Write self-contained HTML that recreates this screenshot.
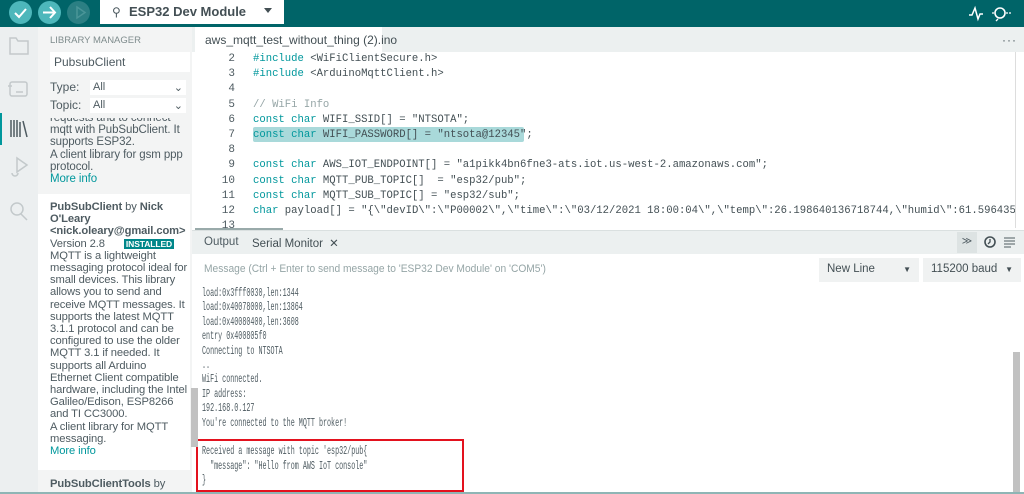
<!DOCTYPE html>
<html><head><meta charset="utf-8"><style>
*{margin:0;padding:0;box-sizing:border-box}
body{width:1024px;height:494px;overflow:hidden;background:#fff;font-family:"Liberation Sans",sans-serif;position:relative}
.abs{position:absolute}
.top{left:0;top:0;width:1024px;height:27px;background:#006468}
.btn{width:23px;height:23px;border-radius:50%;top:1px;background:#4db7bb}
.act{left:0;top:27px;width:38px;height:467px;background:#eceff0}
.lib{left:38px;top:27px;width:154px;height:467px;background:#f3f4f4;overflow:hidden}
.lt{font-size:11.2px;line-height:12.2px;color:#4e5b61;white-space:nowrap;letter-spacing:-0.1px}
.code{font-family:"Liberation Mono",monospace;font-size:10.6px;color:#434f54;white-space:pre}
.ln{width:40px;text-align:right;color:#4e5b61;left:195px}
.kw{color:#00979c}
.cm{color:#95a5a6}
.ser{font-family:"Liberation Mono",monospace;font-size:12px;color:#4e5b61;white-space:pre;transform:scaleX(0.56);transform-origin:left}
</style></head><body>
<div class="abs top"></div>
<div class="abs btn" style="left:9px"><svg width="23" height="23"><path d="M6 12l4 4 7-8" stroke="#fff" stroke-width="2" fill="none"/></svg></div>
<div class="abs btn" style="left:38px"><svg width="23" height="23"><path d="M5 11.5h12M12 6l5 5.5-5 5.5" stroke="#fff" stroke-width="2" fill="none"/></svg></div>
<div class="abs btn" style="left:67px;background:#2b7f83"><svg width="23" height="23"><path d="M10 6l8 5.5-8 5.5z" stroke="#4a9598" stroke-width="1.5" fill="none"/></svg></div>
<div class="abs" style="left:100px;top:0;width:184px;height:24px;background:#fff"></div>
<div class="abs" style="left:112px;top:5px;font-size:12px;color:#4e5b61">⚲</div>
<div class="abs" style="left:129px;top:4px;font-size:13px;font-weight:bold;color:#434f54">ESP32 Dev Module</div>
<div class="abs" style="left:264px;top:8px;border:4px solid transparent;border-top:5px solid #434f54"></div>
<svg class="abs" style="left:965px;top:3px" width="60" height="20"><path d="M4 12h3l3-7 3 11 2-5h3" stroke="#fff" stroke-width="1.5" fill="none"/><circle cx="35" cy="10" r="5" stroke="#fff" stroke-width="1.6" fill="none"/><path d="M27 10h2M41 10h2M44 10h2M33 16l-2 2" stroke="#fff" stroke-width="1.3"/></svg>

<div class="abs act"></div>
<svg class="abs" style="left:0;top:30px" width="38" height="200">
<path d="M10 8h6l2 3h10v13H10z" stroke="#c3c9cb" stroke-width="1.5" fill="none"/>
<rect x="10" y="52" width="17" height="14" rx="2" stroke="#c3c9cb" stroke-width="1.5" fill="none"/><path d="M16 62h7M8 56h4" stroke="#c3c9cb" stroke-width="1.5"/>
<rect x="0" y="83" width="2" height="32" fill="#00979c"/>
<path d="M11 90v17M14 90v17M17 90v17M20 92v15M23 91l4 16" stroke="#4e5b61" stroke-width="1.5" fill="none"/>
<path d="M17 128l10 7-10 7zM12 143a3 3 0 1 0 6 0" stroke="#c3c9cb" stroke-width="1.5" fill="none"/>
<circle cx="17" cy="179" r="6" stroke="#c3c9cb" stroke-width="1.5" fill="none"/><path d="M21 184l6 6" stroke="#c3c9cb" stroke-width="1.5"/>
</svg>

<div class="abs lib">
<div class="abs" style="left:0;top:0;width:154px;height:91px;background:#f3f4f4;z-index:2"></div>
<div class="abs" style="z-index:3;left:12px;top:8px;font-size:9.5px;color:#7f8c8d">LIBRARY MANAGER</div>
<div class="abs" style="z-index:3;left:12px;top:25px;width:140px;height:20px;background:#fff;font-size:12px;color:#4e5b61;padding:3px 4px">PubsubClient</div>
<div class="abs" style="z-index:3;left:12px;top:53px;font-size:12px;color:#4e5b61">Type:</div>
<div class="abs" style="z-index:3;left:52px;top:53px;width:96px;height:15px;background:#fff;font-size:11px;color:#4e5b61;padding:1px 3px">All<span style="float:right">⌄</span></div>
<div class="abs" style="z-index:3;left:12px;top:71px;font-size:12px;color:#4e5b61">Topic:</div>
<div class="abs" style="z-index:3;left:52px;top:71px;width:96px;height:15px;background:#fff;font-size:11px;color:#4e5b61;padding:1px 3px">All<span style="float:right">⌄</span></div>
<div class="abs lt" style="left:12px;top:85px;font-size:11.5px">requests and to connect<br>mqtt with PubSubClient. It<br>supports ESP32.<br>A client library for gsm ppp<br>protocol.<br><span style="color:#00979c">More info</span></div>
<div class="abs" style="left:0;top:167px;width:152px;height:276px;background:#fff"></div>
<div class="abs lt" style="left:12px;top:174px"><b>PubSubClient</b> by <b>Nick</b><br><b>O'Leary</b><br><b>&lt;nick.oleary@gmail.com&gt;</b><br>Version 2.8 <span style="background:#00878a;color:#fff;font-size:8.5px;font-weight:bold;padding:0 2px;margin-left:16px">INSTALLED</span><br>MQTT is a lightweight<br>messaging protocol ideal for<br>small devices. This library<br>allows you to send and<br>receive MQTT messages. It<br>supports the latest MQTT<br>3.1.1 protocol and can be<br>configured to use the older<br>MQTT 3.1 if needed. It<br>supports all Arduino<br>Ethernet Client compatible<br>hardware, including the Intel<br>Galileo/Edison, ESP8266<br>and TI CC3000.<br>A client library for MQTT<br>messaging.<br><span style="color:#00979c">More info</span></div>
<div class="abs lt" style="left:12px;top:451px"><b>PubSubClientTools</b> by</div>
<div class="abs" style="left:153px;top:361px;width:6px;height:59px;background:#c1c1c1"></div>
</div>

<div class="abs" style="left:192px;top:27px;width:832px;height:25px;background:#ecf0f0"></div>
<div class="abs" style="left:195px;top:27px;width:187px;height:25px;background:#fff"></div>
<div class="abs" style="left:205px;top:33px;font-size:12px;color:#434f54">aws_mqtt_test_without_thing (2).ino</div>
<div class="abs" style="left:1002px;top:33px;font-size:12px;color:#4e5b61;letter-spacing:1px">···</div>

<div class="abs" style="left:253px;top:127px;width:271px;height:15px;background:#a9d9da;border-radius:2px"></div>
<div class="abs code ln" style="top:52px;line-height:15.2px;font-size:11px">2
3
4
5
6
7
8
9
10
11
12
13</div>
<div class="abs code" style="left:253px;top:52px;width:762px;overflow:hidden;line-height:15.2px"><span class="kw">#include</span> &lt;WiFiClientSecure.h&gt;
<span class="kw">#include</span> &lt;ArduinoMqttClient.h&gt;

<span class="cm">// WiFi Info</span>
<span class="kw">const char</span> WIFI_SSID[] = "NTSOTA";
<span class="kw">const char</span> WIFI_PASSWORD[] = "ntsota@12345";

<span class="kw">const char</span> AWS_IOT_ENDPOINT[] = "a1pikk4bn6fne3-ats.iot.us-west-2.amazonaws.com";
<span class="kw">const char</span> MQTT_PUB_TOPIC[]  = "esp32/pub";
<span class="kw">const char</span> MQTT_SUB_TOPIC[] = "esp32/sub";
<span class="kw">char</span> payload[] = "{\"devID\":\"P00002\",\"time\":\"03/12/2021 18:00:04\",\"temp\":26.198640136718744,\"humid\":61.59643554687</div>
<div class="abs" style="left:1015px;top:52px;width:1px;height:176px;background:#ddd"></div>
<div class="abs" style="left:192px;top:228px;width:832px;height:3px;background:#fff"></div>
<div class="abs" style="left:192px;top:230px;width:832px;height:24px;background:#ecf0f0;border-top:1px solid #dae0e0"></div>
<div class="abs" style="left:195px;top:228px;width:88px;height:2px;background:#9aa"></div>
<div class="abs" style="left:204px;top:236px;font-size:11.5px;color:#4e5b61">Output</div>
<div class="abs" style="left:252px;top:236px;font-size:11.5px;color:#434f54">Serial Monitor <span style="margin-left:3px">✕</span></div>
<div class="abs" style="left:957px;top:232px;width:20px;height:21px;background:#dde3e3;font-size:10px;color:#4e5b61;text-align:center;padding-top:4px">≫</div>
<svg class="abs" style="left:982px;top:235px" width="40" height="16"><circle cx="8" cy="7" r="5" stroke="#434f54" stroke-width="1.6" fill="none"/><path d="M8 4v3l-2 2" stroke="#434f54" stroke-width="1.3" fill="none"/><path d="M22 3h11M22 6h11M22 9h11M22 12h7" stroke="#4e5b61" stroke-width="1"/></svg>
<div class="abs" style="left:204px;top:263px;font-size:11px;color:#95a5a6;transform:scaleX(0.93);transform-origin:left">Message (Ctrl + Enter to send message to 'ESP32 Dev Module' on 'COM5')</div>
<div class="abs" style="left:819px;top:258px;width:100px;height:24px;background:#f0f2f2;font-size:11.5px;color:#434f54;padding:5px 8px">New Line<span style="float:right;font-size:8px;margin-top:2px">▼</span></div>
<div class="abs" style="left:923px;top:258px;width:98px;height:24px;background:#f0f2f2;font-size:11.5px;color:#434f54;padding:5px 8px">115200 baud<span style="float:right;font-size:8px;margin-top:2px">▼</span></div>
<div class="abs ser" style="left:202px;top:286px;line-height:14.4px">load:0x3fff0030,len:1344
load:0x40078000,len:13864
load:0x40080400,len:3608
entry 0x400805f0
Connecting to NTSOTA
..
WiFi connected.
IP address:
192.168.0.127
You're connected to the MQTT broker!

Received a message with topic 'esp32/pub{
  "message": "Hello from AWS IoT console"
}</div>
<div class="abs" style="left:196px;top:439px;width:268px;height:53px;border:2.5px solid #e3121e"></div>
<div class="abs" style="left:192px;top:388px;width:6px;height:59px;background:#c1c1c1"></div>
<div class="abs" style="left:1013px;top:352px;width:7px;height:140px;background:#c1c1c1"></div>
<div class="abs" style="left:0;top:492px;width:1024px;height:2px;background:#8fb5b5"></div>
</body></html>
